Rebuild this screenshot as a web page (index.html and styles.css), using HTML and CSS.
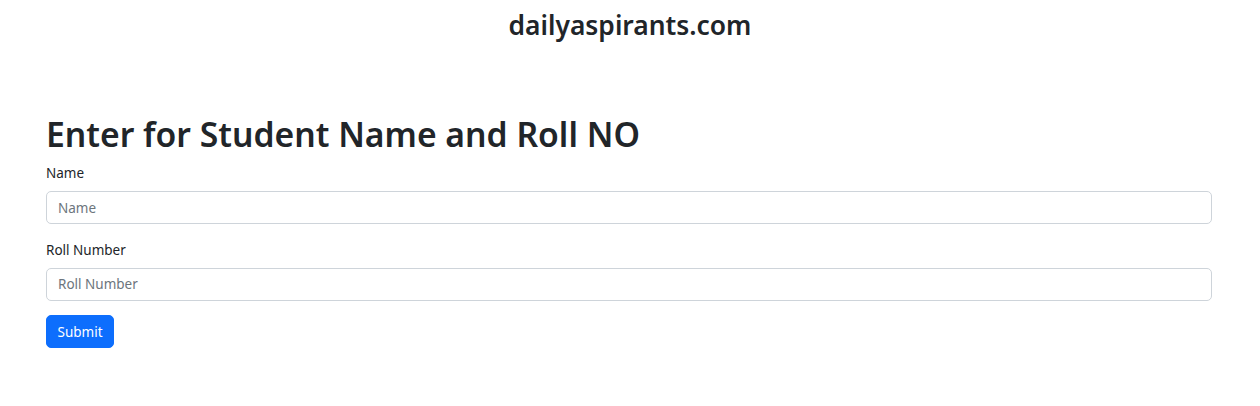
FILE: index.html
```html
<!DOCTYPE html>
<html lang="en">
<head>
<meta charset="utf-8">
<title>dailyaspirants.com</title>
<link rel="stylesheet" href="styles.css">
</head>
<body>
<header class="site-header">
  <h3 class="site-title">dailyaspirants.com</h3>
</header>
<main class="page">
  <h1 class="page-title">Enter for Student Name and Roll NO</h1>
  <form class="student-form">
    <div class="field">
      <label class="field-label" for="name">Name</label>
      <input class="field-input" id="name" type="text" placeholder="Name">
    </div>
    <div class="field">
      <label class="field-label" for="roll">Roll Number</label>
      <input class="field-input" id="roll" type="text" placeholder="Roll Number">
    </div>
    <div class="actions">
      <button class="btn-submit" type="submit">Submit</button>
    </div>
  </form>
</main>
</body>
</html>
```

FILE: styles.css
```css
* { box-sizing: border-box; }
html, body { margin: 0; padding: 0; background: #fff; }
body {
  font-family: "Noto Sans", "Open Sans", sans-serif;
  color: #212529;
}
.site-header {
  padding-top: 9.9px;
  text-align: center;
}
.site-title {
  margin: 0;
  font-size: 26.4px;
  line-height: 1.2;
  font-weight: 600;
}
.page {
  padding: 0 48px 0 46px;
  margin-top: 72.1px;
}
.page-title {
  margin: 0;
  font-size: 33.7px;
  line-height: 1.2;
  font-weight: 600;
}
.student-form {
  display: flex;
  flex-direction: column;
  gap: 14.5px;
  margin-top: 8.2px;
}
.field {
  display: flex;
  flex-direction: column;
  gap: 7px;
}
.field-label {
  margin-top: 1px;
  font-size: 13.5px;
  line-height: 21px;
}
.field-input {
  display: block;
  width: 100%;
  height: 33px;
  padding: 0 11px;
  font-family: inherit;
  font-size: 13.5px;
  color: #212529;
  background: #fff;
  border: 1px solid #ced4da;
  border-radius: 5px;
  outline: none;
}
.field-input::placeholder { color: #6c757d; opacity: 1; }
.actions { display: flex; }
.btn-submit {
  height: 33px;
  padding: 0 10.5px;
  font-family: inherit;
  font-size: 13.5px;
  color: #fff;
  background: #0d6efd;
  border: 1px solid #0d6efd;
  border-radius: 5px;
  cursor: pointer;
}
```
